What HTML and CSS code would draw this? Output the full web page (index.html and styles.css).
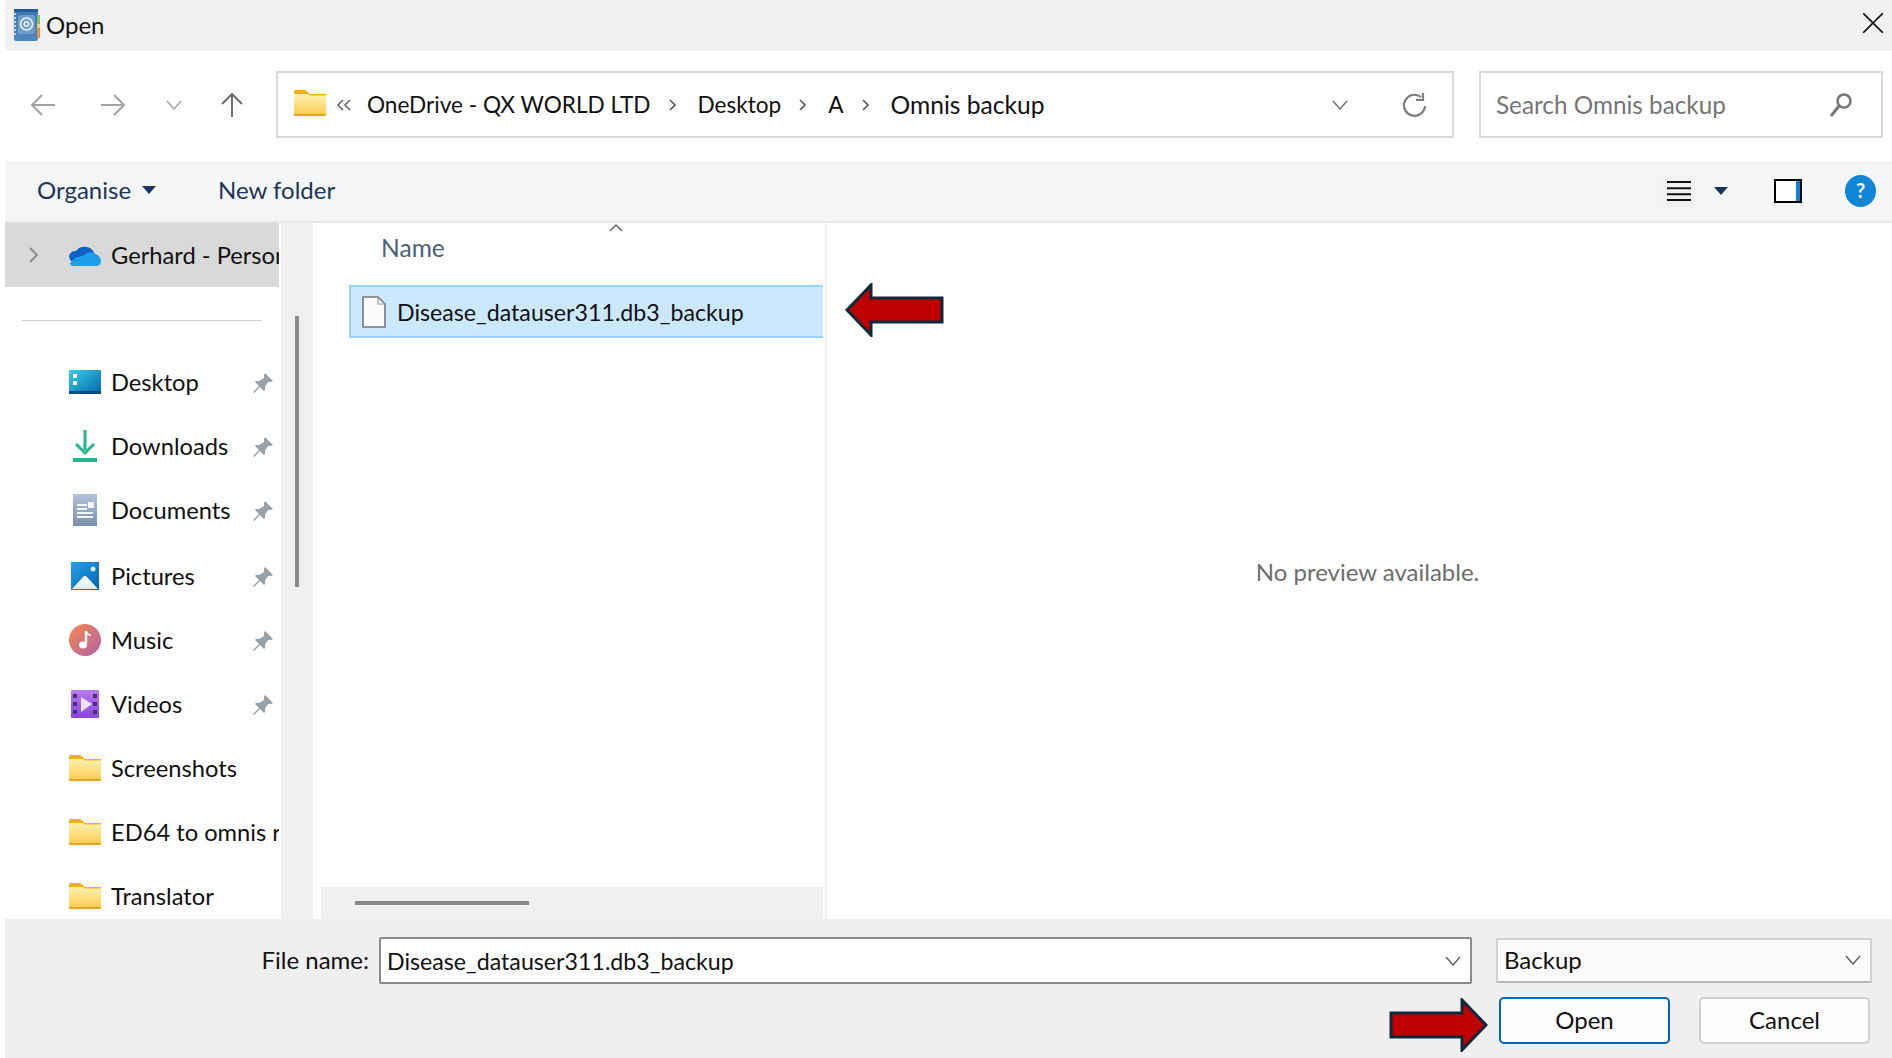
FILE: index.html
```html
<!DOCTYPE html>
<html lang="en">
<head>
    <meta charset="UTF-8">
    <title>Open</title>
    <link rel="stylesheet" href="styles.css">
</head>
<body>
    <svg class="defs" width="0" height="0">
        <defs>
            <linearGradient id="folderFill" x1="0" y1="0" x2="0" y2="1">
                <stop offset="0" stop-color="#fff0b0"/>
                <stop offset="1" stop-color="#fdcb4e"/>
            </linearGradient>
            <linearGradient id="desktopFill" x1="0" y1="0" x2="1" y2="1">
                <stop offset="0" stop-color="#35cfe6"/>
                <stop offset="1" stop-color="#0566ab"/>
            </linearGradient>
            <linearGradient id="picFill" x1="0" y1="0" x2="1" y2="1">
                <stop offset="0" stop-color="#23a2e6"/>
                <stop offset="1" stop-color="#0562b4"/>
            </linearGradient>
            <linearGradient id="hillFill" x1="0" y1="0" x2="0" y2="1">
                <stop offset="0" stop-color="#ffffff"/>
                <stop offset="1" stop-color="#dcecf8"/>
            </linearGradient>
            <linearGradient id="musicFill" x1="0" y1="0" x2="1" y2="1">
                <stop offset="0" stop-color="#f58a4e"/>
                <stop offset="1" stop-color="#b25fa8"/>
            </linearGradient>
            <linearGradient id="docFill" x1="0" y1="0" x2="0" y2="1">
                <stop offset="0" stop-color="#b3c3da"/>
                <stop offset="1" stop-color="#7890ac"/>
            </linearGradient>
            <linearGradient id="videoFill" x1="0" y1="0" x2="0" y2="1">
                <stop offset="0" stop-color="#b77cf0"/>
                <stop offset="1" stop-color="#8a45dc"/>
            </linearGradient>
            <linearGradient id="bookFill" x1="0" y1="0" x2="0" y2="1">
                <stop offset="0" stop-color="#3c78b4"/>
                <stop offset="1" stop-color="#4f87bf"/>
            </linearGradient>
            <symbol id="folder" viewBox="0 0 32 26">
                <path d="M0 2q0-2 2-2h9l5 4h-16z" fill="#f4b00c"/>
                <rect y="4" width="32" height="22" fill="url(#folderFill)"/>
                <rect y="4" x="15" width="17" height="1.5" fill="#f4b00c"/>
                <rect y="24" width="32" height="2" fill="#e6a418"/>
            </symbol>
            <symbol id="pin" viewBox="0 0 22 22">
                <path d="M13 1l8 8-2 1-3 0-3 5 0 3-1 1-4-4-6 6-1-1 6-6-4-4 1-1 3 0 5-3 0-3z" fill="#97a1a9"/>
            </symbol>
        </defs>
    </svg>

    <div class="dialog">
        <div class="titlebar">
            <svg class="app-icon" viewBox="0 0 28 32">
                <rect x="2" y="0" width="24" height="32" rx="2" fill="url(#bookFill)"/>
                <rect x="2" y="0" width="24" height="3" fill="#1f5c98"/>
                <path d="M1 5h3M1 9h3M1 13h3M1 17h3M1 21h3M1 25h3" stroke="#c9d3dc" stroke-width="2"/>
                <rect x="25" y="6" width="3" height="9" fill="#8dc06a"/>
                <rect x="25" y="15" width="3" height="4" fill="#f0d060"/>
                <rect x="25" y="19" width="3" height="10" fill="#e8903a"/>
                <rect x="6" y="6" width="17" height="19" rx="2" fill="#6f9ccb"/>
                <circle cx="14.500" cy="15" r="6" fill="none" stroke="#eef4fb" stroke-width="1.600"/>
                <circle cx="14.500" cy="15" r="2.300" fill="none" stroke="#eef4fb" stroke-width="1.400"/>
            </svg>
            <span class="title-text">Open</span>
            <svg class="close-icon" viewBox="0 0 20 20">
                <path d="M0 0L20 20M20 0L0 20" stroke="#111" stroke-width="1.6" fill="none"/>
            </svg>
        </div>

        <div class="navbar">
            <div class="nav-buttons">
                <svg class="nav-back" viewBox="0 0 24 24"><path d="M1 12H24M11 2L1 12L11 22" stroke="#a3a3a3" stroke-width="2" fill="none"/></svg>
                <svg class="nav-forward" viewBox="0 0 24 24"><path d="M0 12H23M13 2L23 12L13 22" stroke="#a3a3a3" stroke-width="2" fill="none"/></svg>
                <svg class="nav-recent" viewBox="0 0 16 10"><path d="M1 1L8 9L15 1" stroke="#a8a8a8" stroke-width="1.6" fill="none"/></svg>
                <svg class="nav-up" viewBox="0 0 24 24"><path d="M12 24V1M2 11L12 1L22 11" stroke="#6e6e6e" stroke-width="2" fill="none"/></svg>
            </div>
            <div class="address">
                <svg class="address-folder"><use href="#folder"/></svg>
                <svg class="crumb-more" viewBox="0 0 16 12"><path d="M7 1L2 6L7 11M14 1L9 6L14 11" stroke="#666" stroke-width="1.6" fill="none"/></svg>
                <span class="crumb">OneDrive - QX WORLD LTD</span>
                <svg class="crumb-sep" viewBox="0 0 8 12"><path d="M1 1L6 6L1 11" stroke="#555" stroke-width="1.6" fill="none"/></svg>
                <span class="crumb">Desktop</span>
                <svg class="crumb-sep" viewBox="0 0 8 12"><path d="M1 1L6 6L1 11" stroke="#555" stroke-width="1.6" fill="none"/></svg>
                <span class="crumb">A</span>
                <svg class="crumb-sep" viewBox="0 0 8 12"><path d="M1 1L6 6L1 11" stroke="#555" stroke-width="1.6" fill="none"/></svg>
                <span class="crumb crumb-last">Omnis backup</span>
                <svg class="address-drop" viewBox="0 0 16 10"><path d="M1 1L8 9L15 1" stroke="#777" stroke-width="1.5" fill="none"/></svg>
                <svg class="refresh" viewBox="0 0 24 26"><path d="M19 5A10.500 10.500 0 1 0 23 14M21 1V8H14" stroke="#7c7c7c" stroke-width="2.200" fill="none"/></svg>
            </div>
            <div class="search">
                <span class="search-text">Search Omnis backup</span>
                <svg class="search-icon" viewBox="0 0 24 26"><circle cx="15" cy="9" r="6.5" fill="none" stroke="#777" stroke-width="2.6"/><path d="M10 14L2 24" stroke="#777" stroke-width="3"/></svg>
            </div>
        </div>

        <div class="toolbar">
            <span class="tool-btn organise">Organise</span>
            <svg class="caret caret-org" viewBox="0 0 14 8"><path d="M0 0H14L7 8z" fill="#1c3558"/></svg>
            <span class="tool-btn">New folder</span>
            <div class="tool-right">
                <span class="view-btn">
                    <svg class="view-icon" viewBox="0 0 24 20"><path d="M0 1H24M0 7.300H24M0 13.300H24M0 19H24" stroke="#111" stroke-width="2"/></svg>
                </span>
                <svg class="caret caret-view" viewBox="0 0 14 8"><path d="M0 0H14L7 8z" fill="#1c3558"/></svg>
                <svg class="pane-icon" viewBox="0 0 28 24"><rect x="1" y="1" width="26" height="22" fill="#fff" stroke="#000" stroke-width="2"/><rect x="22" y="2" width="4" height="20" fill="#0a84d8"/></svg>
                <svg class="help-icon" viewBox="0 0 31 32"><ellipse cx="15.500" cy="16" rx="15.500" ry="16" fill="#0f86d6"/><text x="15.500" y="23" class="help-mark">?</text></svg>
            </div>
        </div>

        <div class="main">
            <aside class="sidebar">
                <div class="nav-item top-item">
                    <svg class="chevron" viewBox="0 0 10 16"><path d="M1 1L8 8L1 15" stroke="#8c8c8c" stroke-width="2" fill="none"/></svg>
                    <svg class="item-icon" viewBox="0 0 32 22"><path d="M7 7a10 9 0 0 1 18 2l-13 9H3q-3-3-3-6a7 7 0 0 1 7-5z" fill="#0b62c4"/><path d="M2 18q-2 2 1 4h25q4-1 4-5q0-5-7-8q-7-2-11 3q-7 0-12 6z" fill="#1f9fe8"/></svg>
                    <span class="item-label">Gerhard - Personal</span>
                </div>
                <div class="side-sep"></div>
                <div class="nav-item">
                    <svg class="item-icon" viewBox="0 0 32 24"><rect width="32" height="24" rx="1" fill="url(#desktopFill)"/><rect y="21" width="32" height="3" fill="#054a7d"/><rect x="4" y="4" width="4" height="4" fill="#fff"/><rect x="4" y="11" width="4" height="4" fill="#fff"/></svg>
                    <span class="item-label">Desktop</span>
                    <svg class="pin"><use href="#pin"/></svg>
                </div>
                <div class="nav-item">
                    <svg class="item-icon" viewBox="0 0 32 32"><path d="M16 0V20M7 14L16 23L25 14" stroke="#23b68f" stroke-width="3" fill="none"/><rect x="4" y="28" width="24" height="4" fill="#1fb594"/></svg>
                    <span class="item-label">Downloads</span>
                    <svg class="pin"><use href="#pin"/></svg>
                </div>
                <div class="nav-item">
                    <svg class="item-icon" viewBox="0 0 32 32"><rect x="4" width="24" height="32" fill="url(#docFill)"/><path d="M8 10h10v2H8zM8 14h10v2H8zM8 18h16v2H8zM8 22h16v2H8z" fill="#f2f5fa"/><rect x="19" y="8" width="6" height="6" fill="#f2f5fa"/></svg>
                    <span class="item-label">Documents</span>
                    <svg class="pin"><use href="#pin"/></svg>
                </div>
                <div class="nav-item pictures-item">
                    <svg class="item-icon" viewBox="0 0 32 32"><rect x="2" y="2" width="28" height="28" fill="url(#picFill)"/><path d="M3 29L14 17Q16 15 18 17L29 29z" fill="url(#hillFill)"/><circle cx="24" cy="9" r="2.500" fill="#d6ecfa"/></svg>
                    <span class="item-label">Pictures</span>
                    <svg class="pin"><use href="#pin"/></svg>
                </div>
                <div class="nav-item">
                    <svg class="item-icon" viewBox="0 0 32 32"><circle cx="16" cy="16" r="16" fill="url(#musicFill)"/><path d="M17 7V20" stroke="#fff" stroke-width="2.400"/><ellipse cx="14" cy="21" rx="4" ry="3.500" fill="#fff"/><path d="M17 7q1 4 5 4" stroke="#fff" stroke-width="1.600" fill="none"/></svg>
                    <span class="item-label">Music</span>
                    <svg class="pin"><use href="#pin"/></svg>
                </div>
                <div class="nav-item">
                    <svg class="item-icon" viewBox="0 0 32 32"><rect x="2" y="2" width="28" height="28" rx="1" fill="url(#videoFill)"/><path d="M4 6h4v4H4zM4 14h4v4H4zM4 22h4v4H4zM24 6h4v4h-4zM24 14h4v4h-4zM24 22h4v4h-4z" fill="#4b2c7e"/><path d="M12 9L23 16L12 24z" fill="#efe4fa"/></svg>
                    <span class="item-label">Videos</span>
                    <svg class="pin"><use href="#pin"/></svg>
                </div>
                <div class="nav-item">
                    <svg class="item-icon"><use href="#folder"/></svg>
                    <span class="item-label">Screenshots</span>
                </div>
                <div class="nav-item">
                    <svg class="item-icon"><use href="#folder"/></svg>
                    <span class="item-label">ED64 to omnis reports</span>
                </div>
                <div class="nav-item">
                    <svg class="item-icon"><use href="#folder"/></svg>
                    <span class="item-label">Translator</span>
                </div>
            </aside>
            <div class="side-scroll"><div class="side-thumb"></div></div>

            <section class="filelist">
                <div class="list-head">
                    <span class="col-name">Name</span>
                    <svg class="sort-caret" viewBox="0 0 14 9"><path d="M1 8L7 2L13 8" stroke="#666" stroke-width="1.500" fill="none"/></svg>
                </div>
                <div class="file-row">
                    <svg class="file-icon" viewBox="0 0 24 32"><path d="M1 1H16L23 8V31H1z" fill="#fbfbfb" stroke="#777" stroke-width="1.600"/><path d="M16 1V8H23" fill="none" stroke="#999" stroke-width="1.200"/></svg>
                    <span class="file-name">Disease_datauser311.db3_backup</span>
                </div>
                <div class="list-spacer"></div>
                <div class="list-hscroll"><div class="list-thumb"></div></div>
            </section>

            <section class="preview">No preview available.</section>
        </div>

        <div class="bottom">
            <div class="file-line">
                <label class="file-label">File name:</label>
                <div class="file-input">
                    <span class="file-value">Disease_datauser311.db3_backup</span>
                    <svg class="drop" viewBox="0 0 16 10"><path d="M1 1L8 9L15 1" stroke="#666" stroke-width="1.500" fill="none"/></svg>
                </div>
                <div class="filter-select">
                    <span class="filter-value">Backup</span>
                    <svg class="drop" viewBox="0 0 16 10"><path d="M1 1L8 9L15 1" stroke="#666" stroke-width="1.500" fill="none"/></svg>
                </div>
            </div>
            <div class="button-line">
                <button class="btn btn-open">Open</button>
                <button class="btn">Cancel</button>
            </div>
        </div>

        <!-- annotation arrows drawn over the dialog -->
        <svg class="arrow arrow-file" viewBox="0 0 99 54"><path d="M2 27L26 2V15H97V39H26V52z" fill="#be0000" stroke="#10293a" stroke-width="3"/></svg>
        <svg class="arrow arrow-open" viewBox="0 0 99 54"><path d="M97 27L73 2V15H2V39H73V52z" fill="#be0000" stroke="#10293a" stroke-width="3"/></svg>
    </div>
</body>
</html>
```

FILE: styles.css
```css
* {
    box-sizing: border-box;
}
body {
    margin: 0;
    background: #fff;
    font-family: Lato, "Noto Sans", sans-serif;
    font-size: 24px;
    color: #111;
    overflow: hidden;
}
svg {
    display: block;
    flex: none;
}
.defs {
    position: absolute;
}
.dialog {
    position: relative;
    width: 1892px;
    height: 1058px;
    padding-left: 5px;
    display: flex;
    flex-direction: column;
}

/* title bar */
.titlebar {
    height: 51px;
    background: #f1f1f1;
    display: flex;
    align-items: center;
    padding-left: 7px;
    padding-bottom: 2px;
}
.app-icon {
    width: 28px;
    height: 32px;
}
.title-text {
    margin-left: 6px;
}
.close-icon {
    width: 20px;
    height: 20px;
    margin-left: auto;
    margin-right: 9px;
    margin-top: -4px;
}

/* navigation row */
.navbar {
    height: 110px;
    display: flex;
    align-items: center;
    padding-bottom: 3px;
}
.nav-buttons {
    width: 271px;
    display: flex;
    align-items: center;
    padding-left: 26px;
}
.nav-back,
.nav-forward,
.nav-up {
    width: 24px;
    height: 24px;
}
.nav-forward {
    margin-left: 46px;
}
.nav-recent {
    width: 16px;
    height: 10px;
    margin-left: 41px;
}
.nav-up {
    margin-left: 38px;
}
.address {
    width: 1178px;
    height: 67px;
    border: 2px solid #d9d9d9;
    display: flex;
    align-items: center;
    padding-left: 16px;
    padding-right: 26px;
}
.address-folder {
    width: 32px;
    height: 26px;
    margin-top: -4px;
}
.crumb {
    font-size: 22.6px;
}
.crumb-last {
    font-size: 24.6px;
}
.crumb-more {
    width: 16px;
    height: 12px;
    margin-left: 10px;
    margin-right: 15px;
}
.crumb-sep {
    width: 8px;
    height: 12px;
    margin-left: 18px;
    margin-right: 21px;
}
.address-drop {
    width: 16px;
    height: 10px;
    margin-left: auto;
    margin-right: 54px;
}
.refresh {
    width: 24px;
    height: 26px;
}
.search {
    width: 404px;
    height: 67px;
    margin-left: 25px;
    border: 2px solid #d9d9d9;
    display: flex;
    align-items: center;
    justify-content: space-between;
    padding-left: 15px;
    padding-right: 28px;
}
.search-text {
    color: #757575;
    font-size: 24.3px;
}
.search-icon {
    width: 24px;
    height: 26px;
}

/* toolbar */
.toolbar {
    height: 62px;
    background: #f4f5f7;
    border-bottom: 2px solid #e6e7e9;
    display: flex;
    align-items: center;
    padding-left: 32px;
    padding-bottom: 3px;
}
.tool-btn {
    color: #1c3558;
}
.caret {
    width: 14px;
    height: 8px;
}
.caret-org {
    margin-left: 11px;
    margin-right: 62px;
}
.tool-right {
    margin-left: auto;
    margin-top: 3px;
    display: flex;
    align-items: center;
    padding-right: 16px;
}
.view-btn {
    width: 32px;
    height: 32px;
    background: #f1f1f1;
    display: flex;
    align-items: center;
    justify-content: center;
}
.view-icon {
    width: 24px;
    height: 20px;
}
.caret-view {
    margin-left: 19px;
    margin-right: 46px;
}
.pane-icon {
    width: 28px;
    height: 24px;
}
.help-icon {
    width: 31px;
    height: 32px;
    margin-left: 43px;
}
.help-mark {
    fill: #fff;
    font-size: 20px;
    font-weight: 700;
    text-anchor: middle;
}

/* main area */
.main {
    height: 696px;
    display: flex;
}
.sidebar {
    width: 276px;
    flex: none;
    overflow: hidden;
}
.nav-item {
    width: 274px;
    height: 64px;
    display: flex;
    align-items: center;
    padding-left: 64px;
    position: relative;
    overflow: hidden;
}
.top-item {
    background: #d9d9d9;
    padding-left: 24px;
}
.chevron {
    width: 10px;
    height: 16px;
    margin-right: 30px;
}
.item-icon {
    width: 32px;
    height: 32px;
    margin-right: 10px;
}
.item-label {
    white-space: nowrap;
    font-size: 23.7px;
}
.pin {
    width: 22px;
    height: 22px;
    position: absolute;
    left: 247px;
    top: 22px;
}
.pictures-item {
    margin-top: 2px;
}
.side-sep {
    height: 1px;
    width: 240px;
    margin: 33px 0 29px 17px;
    background: #cfcfcf;
}
.side-scroll {
    width: 32px;
    flex: none;
    background: #f0f0f0;
    padding-top: 93px;
    padding-left: 14px;
}
.side-thumb {
    width: 4px;
    height: 271px;
    background: #8a8a8a;
}
.filelist {
    width: 506px;
    margin-left: 8px;
    flex: none;
    border-right: 2px solid #eeeeee;
    padding-right: 2px;
    display: flex;
    flex-direction: column;
}
.list-head {
    height: 62px;
    padding-left: 60px;
    padding-bottom: 14px;
    display: flex;
    align-items: center;
    position: relative;
    color: #4c607a;
}
.col-name {
    font-size: 24.6px;
}
.sort-caret {
    width: 14px;
    height: 9px;
    position: absolute;
    left: 288px;
    top: 0;
}
.file-row {
    height: 53px;
    margin-left: 28px;
    background: #cce8ff;
    border: 2px solid #99d1ff;
    border-right: 0;
    display: flex;
    align-items: center;
    padding-left: 11px;
}
.file-icon {
    width: 24px;
    height: 32px;
    margin-right: 11px;
}
.file-name,
.file-value {
    font-size: 23.2px;
}
.list-spacer {
    flex: 1;
}
.list-hscroll {
    height: 32px;
    background: #f0f0f0;
    padding-top: 14px;
    padding-left: 34px;
}
.list-thumb {
    width: 174px;
    height: 4px;
    background: #8a8a8a;
}
.preview {
    flex: 1;
    display: flex;
    align-items: center;
    justify-content: center;
    color: #6d6d6d;
    padding-left: 16px;
}

/* bottom panel */
.bottom {
    flex: 1;
    background: #efefef;
    padding-top: 18px;
}
.file-line {
    display: flex;
    align-items: center;
    padding-right: 20px;
}
.file-label {
    width: 364px;
    text-align: right;
    margin-right: 11px;
    margin-top: -2px;
}
.file-input {
    width: 1093px;
    height: 47px;
    margin-left: -1px;
    background: #fff;
    border: 2px solid #8a8a8a;
    border-radius: 2px;
    display: flex;
    align-items: center;
    justify-content: space-between;
    padding: 0 9px 0 6px;
}
.filter-select {
    width: 376px;
    height: 45px;
    margin-left: 24px;
    background: #fbfbfb;
    border: 2px solid #d0d0d0;
    border-bottom-color: #b8b8b8;
    border-radius: 2px;
    display: flex;
    align-items: center;
    justify-content: space-between;
    padding: 0 9px 2px 6px;
}
.drop {
    width: 16px;
    height: 10px;
}
.button-line {
    display: flex;
    justify-content: flex-end;
    gap: 29px;
    margin-top: 13px;
    padding-right: 22px;
}
.btn {
    width: 171px;
    height: 47px;
    background: #fdfdfd;
    border: 2px solid #d0d0d0;
    border-radius: 5px;
    font: inherit;
    color: #111;
    padding: 0 0 2px;
}
.btn-open {
    border-color: #0067c0;
}

/* annotation arrows */
.arrow {
    position: absolute;
    width: 99px;
    height: 54px;
}
.arrow-file {
    left: 845px;
    top: 283px;
}
.arrow-open {
    left: 1389px;
    top: 998px;
}
```
